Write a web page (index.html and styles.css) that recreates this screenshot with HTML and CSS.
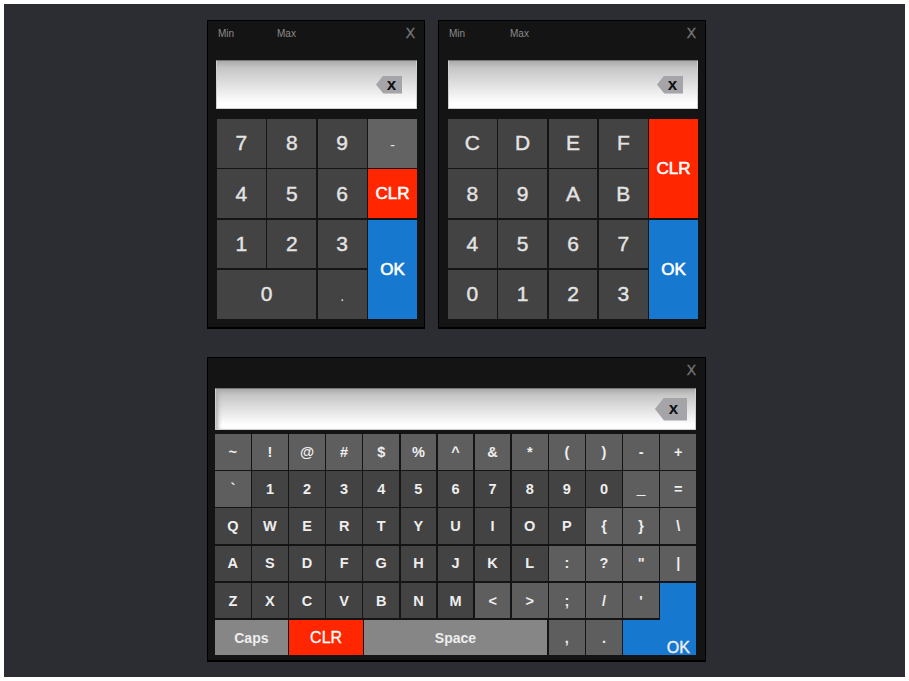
FILE: index.html
```html
<!DOCTYPE html>
<html lang="en">
<head>
    <meta charset="UTF-8">
    <meta name="viewport" content="width=device-width, initial-scale=1.0">
    <title>On-screen keypads</title>
    <link rel="stylesheet" href="styles.css">
</head>
<body>
    <div class="screen">
        <div class="stage">
            <div class="top-row">
                <!-- Decimal keypad -->
                <div class="panel panel-dec">
                    <div class="panel-head">
                        <span class="limit">Min</span>
                        <span class="limit limit-max">Max</span>
                        <span class="close">X</span>
                    </div>
                    <div class="field"><span class="backspace">x</span></div>
                    <div class="keys keys-dec">
                        <button class="key">7</button>
                        <button class="key">8</button>
                        <button class="key">9</button>
                        <button class="key light small">-</button>
                        <button class="key">4</button>
                        <button class="key">5</button>
                        <button class="key">6</button>
                        <button class="key clr">CLR</button>
                        <button class="key">1</button>
                        <button class="key">2</button>
                        <button class="key">3</button>
                        <button class="key ok tall">OK</button>
                        <button class="key wide">0</button>
                        <button class="key small">.</button>
                    </div>
                </div>

                <!-- Hex keypad -->
                <div class="panel panel-hex">
                    <div class="panel-head">
                        <span class="limit">Min</span>
                        <span class="limit limit-max">Max</span>
                        <span class="close">X</span>
                    </div>
                    <div class="field"><span class="backspace">x</span></div>
                    <div class="keys keys-hex">
                        <button class="key">C</button>
                        <button class="key">D</button>
                        <button class="key">E</button>
                        <button class="key">F</button>
                        <button class="key clr tall">CLR</button>
                        <button class="key">8</button>
                        <button class="key">9</button>
                        <button class="key">A</button>
                        <button class="key">B</button>
                        <button class="key">4</button>
                        <button class="key">5</button>
                        <button class="key">6</button>
                        <button class="key">7</button>
                        <button class="key ok tall">OK</button>
                        <button class="key">0</button>
                        <button class="key">1</button>
                        <button class="key">2</button>
                        <button class="key">3</button>
                    </div>
                </div>
            </div>

            <!-- Full keyboard -->
            <div class="panel panel-full">
                <div class="panel-head head-full">
                    <span class="close">X</span>
                </div>
                <div class="field field-full"><span class="backspace">x</span></div>
                <div class="keys keys-full">
                    <button class="key light">~</button>
                    <button class="key light">!</button>
                    <button class="key light">@</button>
                    <button class="key light">#</button>
                    <button class="key light">$</button>
                    <button class="key light">%</button>
                    <button class="key light">^</button>
                    <button class="key light">&amp;</button>
                    <button class="key light">*</button>
                    <button class="key light">(</button>
                    <button class="key light">)</button>
                    <button class="key light">-</button>
                    <button class="key light">+</button>

                    <button class="key light">`</button>
                    <button class="key">1</button>
                    <button class="key">2</button>
                    <button class="key">3</button>
                    <button class="key">4</button>
                    <button class="key">5</button>
                    <button class="key">6</button>
                    <button class="key">7</button>
                    <button class="key">8</button>
                    <button class="key">9</button>
                    <button class="key">0</button>
                    <button class="key light underscore">_</button>
                    <button class="key light">=</button>

                    <button class="key">Q</button>
                    <button class="key">W</button>
                    <button class="key">E</button>
                    <button class="key">R</button>
                    <button class="key">T</button>
                    <button class="key">Y</button>
                    <button class="key">U</button>
                    <button class="key">I</button>
                    <button class="key">O</button>
                    <button class="key">P</button>
                    <button class="key light">{</button>
                    <button class="key light">}</button>
                    <button class="key light">\</button>

                    <button class="key">A</button>
                    <button class="key">S</button>
                    <button class="key">D</button>
                    <button class="key">F</button>
                    <button class="key">G</button>
                    <button class="key">H</button>
                    <button class="key">J</button>
                    <button class="key">K</button>
                    <button class="key">L</button>
                    <button class="key light">:</button>
                    <button class="key light">?</button>
                    <button class="key light">"</button>
                    <button class="key light">|</button>

                    <button class="key">Z</button>
                    <button class="key">X</button>
                    <button class="key">C</button>
                    <button class="key">V</button>
                    <button class="key">B</button>
                    <button class="key">N</button>
                    <button class="key">M</button>
                    <button class="key light">&lt;</button>
                    <button class="key light">&gt;</button>
                    <button class="key light">;</button>
                    <button class="key light">/</button>
                    <button class="key light">'</button>
                    <div class="ok-top"></div>

                    <button class="key gray span-2">Caps</button>
                    <button class="key clr clr-full span-2">CLR</button>
                    <button class="key gray space span-5">Space</button>
                    <button class="key light">,</button>
                    <button class="key light">.</button>
                    <button class="key ok ok-full span-2">OK</button>
                </div>
            </div>
        </div>
    </div>
</body>
</html>
```

FILE: styles.css
```css
html, body {
    height: 100%;
}

body {
    margin: 0;
    padding: 4px;
    box-sizing: border-box;
    background-color: #fff;
    font-family: "Liberation Sans", Arial, sans-serif;
}

.screen {
    height: 100%;
    background-color: #2b2d32;
    padding: 16px 0 0 203px;
    box-sizing: border-box;
    overflow: hidden;
}

.stage {
    width: 499px;
}

.top-row {
    display: flex;
    justify-content: space-between;
    margin-bottom: 28px;
}

.panel {
    background-color: #141414;
    border: 1px solid #000;
    border-bottom-width: 2px;
    box-sizing: border-box;
    padding: 0 7px 0 9px;
}

.panel-dec {
    width: 218px;
    height: 309px;
}

.panel-dec .field {
    margin-left: -1px;
}

.panel-hex {
    width: 268px;
    height: 309px;
}

.panel-full {
    height: 305px;
    padding: 0 9px 0 7px;
}

.panel-head {
    display: flex;
    align-items: center;
    height: 24px;
    margin-bottom: 15px;
}

.head-full {
    margin-bottom: 6px;
}

.limit {
    width: 58px;
    font-size: 10px;
    color: #8a8a8a;
    padding-left: 1px;
}

.panel-hex .limit {
    width: 60px;
}

.close {
    margin-left: auto;
    margin-right: 2px;
    font-size: 14px;
    color: #777;
    -webkit-text-stroke: 0.3px #777;
}

.head-full .close {
    margin-right: 0;
}

.field {
    display: flex;
    align-items: center;
    justify-content: flex-end;
    height: 49px;
    padding-right: 14px;
    margin-bottom: 10px;
    box-sizing: border-box;
    border: 1px solid #d0d0d0;
    border-top-color: #777;
    background: linear-gradient(#aaa, #c6c6c6 15%, #fff 90%);
    border-radius: 1px;
}

.field-full {
    height: 42px;
    margin-bottom: 4px;
    padding-right: 8px;
    box-shadow: inset 5px 0 4px -3px #aaa;
}

.backspace {
    width: 26px;
    height: 18px;
    line-height: 18px;
    padding-left: 5px;
    box-sizing: border-box;
    background-color: #a5a5a9;
    clip-path: polygon(0 50%, 28% 0, 100% 0, 100% 100%, 28% 100%);
    text-align: center;
    font-size: 17px;
    font-weight: bold;
    color: #111;
}

.field-full .backspace {
    width: 32px;
    height: 23px;
    line-height: 22px;
}

.keys {
    display: grid;
    gap: 1.5px;
}

.keys-dec {
    grid-template-columns: repeat(4, 1fr);
    grid-template-rows: repeat(4, 48.75px);
}

.keys-hex {
    grid-template-columns: repeat(5, 1fr);
    grid-template-rows: repeat(4, 48.75px);
}

.keys-full {
    grid-template-columns: repeat(13, 1fr);
    grid-template-rows: repeat(6, 35.5px);
    gap: 1.7px 1.5px;
}

.key {
    padding: 0;
    border: none;
    background-color: #434343;
    color: #e4e4e4;
    font-family: inherit;
    font-size: 21px;
    -webkit-text-stroke: 0.4px #e4e4e4;
}

.light {
    background-color: #636363;
}

.small {
    font-size: 14px;
    padding-top: 4px;
    -webkit-text-stroke: 0;
}

.clr {
    background-color: #ff2600;
    color: #fff;
    font-size: 17px;
    padding-top: 1px;
    -webkit-text-stroke: 0.6px #fff;
}

.ok {
    background-color: #1778d0;
    color: #fff;
    font-size: 17px;
    padding-top: 2px;
    -webkit-text-stroke: 0.6px #fff;
}

.tall {
    grid-row: span 2;
}

.wide {
    grid-column: span 2;
}

.keys-full .key {
    font-size: 14.5px;
    font-weight: bold;
    color: #eee;
    -webkit-text-stroke: 0;
}

.keys-full .light {
    background-color: #5e5e5e;
}

.keys-full .underscore {
    -webkit-text-stroke: 0.5px #eee;
}

.keys-full .gray {
    background-color: #868686;
    font-size: 14px;
}

.keys-full .space {
    margin: 0 1px;
}

.keys-full .clr-full {
    background-color: #ff2600;
    margin-right: -1px;
    font-size: 16px;
    font-weight: normal;
    color: #fff;
    -webkit-text-stroke: 0.3px #fff;
}

.keys-full .ok-full {
    background-color: #1778d0;
    font-size: 16px;
    font-weight: normal;
    color: #eee;
    text-align: right;
    padding: 19px 6px 0 0;
    line-height: 18px;
    -webkit-text-stroke: 0.4px #eee;
}

.ok-top {
    background-color: #1778d0;
    margin-bottom: -2px;
}

.span-2 {
    grid-column: span 2;
}

.span-5 {
    grid-column: span 5;
}
```
